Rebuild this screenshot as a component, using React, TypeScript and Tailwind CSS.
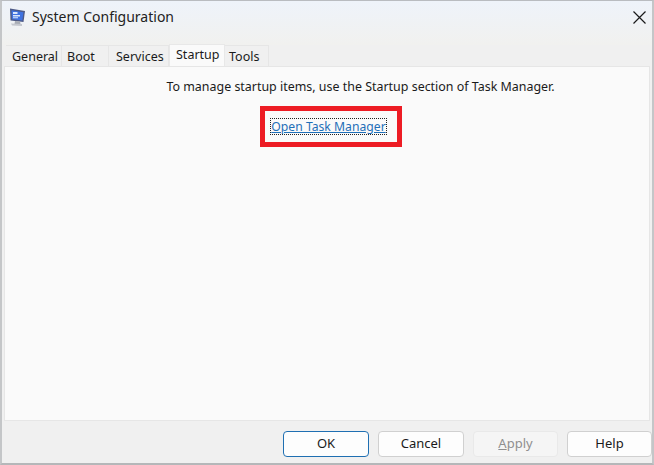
const tabs = [
  { label: "General", width: "w-[56px] pl-[6px]", active: false },
  { label: "Boot", width: "w-[47px] pl-[5px]", active: false },
  { label: "Services", width: "w-[60px] pl-[7px]", active: false },
  { label: "Startup", width: "w-[56px] pl-[6px]", active: true },
  { label: "Tools", width: "w-[44px] pl-[4px]", active: false },
];

function MonitorIcon() {
  return (
    <svg width="20" height="20" viewBox="0 0 20 20" className="shrink-0">
      <path d="M3 1.5 L18 4 L16.5 15 L3.5 13.5 Z" fill="#4d5a86" />
      <path d="M4.5 3.2 L16.5 5.2 L15.3 13.4 L5 12.2 Z" fill="#3f72e0" />
      <path d="M6 5 H10.5 V7 H6 Z M6 8 H13 V9.5 H6 Z M6 10.2 H11 V11.2 H6 Z" fill="#dbe7fb" />
      <path d="M8 14 L13 14.5 L13.5 17 L7.5 17 Z" fill="#a9adb5" />
      <path d="M4 16.5 L15 17 L15 19 L5 18.5 Z" fill="#c4c7ce" />
    </svg>
  );
}

function DialogButton({ label, width, primary, disabled }: { label: React.ReactNode; width: string; primary?: boolean; disabled?: boolean }) {
  let cls = "border-[#d0d0d0] bg-[#fdfdfd] text-[#1a1a1a]";
  if (primary) cls = "border-[#1f6fb2] bg-[#fdfdfd] text-[#1a1a1a]";
  if (disabled) cls = "border-[#e9e9e9] bg-[#f5f5f5] text-[#8f8f8f]";
  return (
    <div className={`flex h-[26px] ${width} items-center justify-center rounded-[4px] border text-[13px] ${cls}`}>
      {label}
    </div>
  );
}

export default function App() {
  return (
    <div
      className="flex h-[465px] w-[654px] flex-col overflow-hidden border-x-[2px] border-t-[1px] border-b-[2px] border-x-[#c4c6c8] border-t-[#b9bcc0] border-b-[#b5b7b9] bg-[#f0f0f0] text-[#1a1a1a]"
      style={{ fontFamily: '"Noto Sans", "Open Sans", sans-serif' }}
    >
      {/* Title bar */}
      <div className="flex h-[44px] shrink-0 items-start justify-between bg-gradient-to-b from-[#eef3fa] to-[#f1f1ef] pl-[5px] pr-[6px] pt-[6px]">
        <div className="flex items-center gap-[5px]">
          <MonitorIcon />
          <span className="text-[14px] leading-[20px] text-[#222]">System Configuration</span>
        </div>
        <svg width="13" height="13" viewBox="0 0 13 13" className="mt-[4px]">
          <path d="M0.5 0.5 L12.5 12.5 M12.5 0.5 L0.5 12.5" stroke="#1a1a1a" strokeWidth="1.2" fill="none" />
        </svg>
      </div>

      {/* Tabs */}
      <div className="flex h-[21px] shrink-0 items-end pl-[4px] text-[12.5px]">
        {tabs.map((tab) => (
          <div
            key={tab.label}
            className={
              tab.active
                ? `flex h-[23px] ${tab.width} -mb-[1px] items-start border-x border-t border-[#e8e8e8] bg-[#fafafa] pt-[1px] leading-[18px]`
                : `flex h-[21px] ${tab.width} items-start border-r border-t border-[#e6e6e6] bg-[#f0f0f0] pt-[2px] leading-[18px]`
            }
          >
            {tab.label}
          </div>
        ))}
      </div>

      {/* Panel */}
      <div className="mx-[2px] flex h-[355px] shrink-0 flex-col items-center border border-[#e6e6e6] bg-[#fafafa]">
        <p className="ml-[67px] mt-[11px] text-[12.45px] leading-[18px] whitespace-nowrap">
          To manage startup items, use the Startup section of Task Manager.
        </p>
        <div className="ml-[8px] mt-[10px] flex h-[41px] w-[142px] items-center justify-center border-[5px] border-[#ed1c24] pr-[5px]">
          <a className="border border-dotted border-[#222] text-[12.2px] leading-[15px] text-[#1f6fb8] underline">
            Open Task Manager
          </a>
        </div>
      </div>

      {/* Footer */}
      <div className="flex flex-1 items-start justify-end gap-[9px] pt-[10px]">
        <DialogButton width="w-[86px]" label="OK" primary />
        <DialogButton width="w-[86px]" label="Cancel" />
        <DialogButton width="w-[85px]" disabled label={<><span className="underline">A</span>pply</>} />
        <DialogButton width="w-[85px]" label="Help" />
      </div>
    </div>
  );
}
